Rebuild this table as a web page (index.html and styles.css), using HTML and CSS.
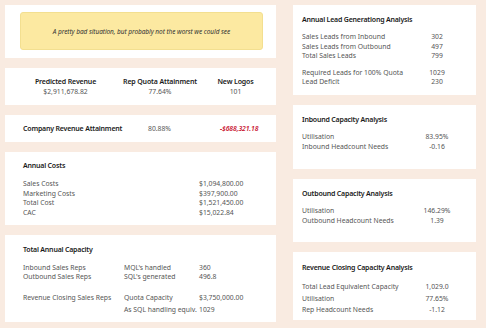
FILE: index.html
```html
<!DOCTYPE html>
<html>
<head>
    <title>Sales Capacity Overview</title>
    <link rel="stylesheet" href="styles.css">
</head>
<body>
    <div class="page">
        <div class="column">
            <div class="card card-note">
                <div class="note">A pretty bad situation, but probably not the worst we could see</div>
            </div>

            <div class="card card-kpis">
                <div class="kpi">
                    <div class="kpi-title">Predicted Revenue</div>
                    <div class="kpi-value">$2,911,678.82</div>
                </div>
                <div class="kpi">
                    <div class="kpi-title">Rep Quota Attainment</div>
                    <div class="kpi-value">77.64%</div>
                </div>
                <div class="kpi">
                    <div class="kpi-title">New Logos</div>
                    <div class="kpi-value">101</div>
                </div>
            </div>

            <div class="card card-attain">
                <div class="card-title">Company Revenue Attainment</div>
                <div class="muted">80.88%</div>
                <div class="negative">-$688,321.18</div>
            </div>

            <div class="card card-costs">
                <h3 class="card-title">Annual Costs</h3>
                <div class="cost-table">
                    <span>Sales Costs</span><span>$1,094,800.00</span>
                    <span>Marketing Costs</span><span>$397,900.00</span>
                    <span>Total Cost</span><span>$1,521,450.00</span>
                    <span>CAC</span><span>$15,022.84</span>
                </div>
            </div>

            <div class="card card-capacity">
                <h3 class="card-title">Total Annual Capacity</h3>
                <div class="cap-table">
                    <span>Inbound Sales Reps</span><span>MQL's handled</span><span>360</span>
                    <span>Outbound Sales Reps</span><span>SQL's generated</span><span>496.8</span>
                </div>
                <div class="cap-table cap-closing">
                    <span>Revenue Closing Sales Reps</span><span>Quota Capacity</span><span>$3,750,000.00</span>
                    <span></span><span>As SQL handling equiv.</span><span>1029</span>
                </div>
            </div>
        </div>

        <div class="column">
            <div class="card side side-leads">
                <h3 class="card-title">Annual Lead Generationg Analysis</h3>
                <div class="side-table">
                    <span>Sales Leads from Inbound</span><span>302</span>
                    <span>Sales Leads from Outbound</span><span>497</span>
                    <span>Total Sales Leads</span><span>799</span>
                </div>
                <div class="side-table spaced">
                    <span>Required Leads for 100% Quota</span><span>1029</span>
                    <span>Lead Deficit</span><span>230</span>
                </div>
            </div>

            <div class="card side side-inbound">
                <h3 class="card-title">Inbound Capacity Analysis</h3>
                <div class="side-table">
                    <span>Utilisation</span><span>83.95%</span>
                    <span>Inbound Headcount Needs</span><span>-0.16</span>
                </div>
            </div>

            <div class="card side side-outbound">
                <h3 class="card-title">Outbound Capacity Analysis</h3>
                <div class="side-table">
                    <span>Utilisation</span><span>146.29%</span>
                    <span>Outbound Headcount Needs</span><span>1.39</span>
                </div>
            </div>

            <div class="card side side-closing">
                <h3 class="card-title">Revenue Closing Capacity Analysis</h3>
                <div class="side-table tall">
                    <span>Total Lead Equivalent Capacity</span><span>1,029.0</span>
                    <span>Utilisation</span><span>77.65%</span>
                    <span>Rep Headcount Needs</span><span>-1.12</span>
                </div>
            </div>
        </div>
    </div>
</body>
</html>
```

FILE: styles.css
```css
body {
    margin: 0;
    font-family: "Noto Sans", Arial, sans-serif;
    font-size: 6.8px;
    background-color: #f9ebe1;
    color: #555555;
}
.page {
    display: grid;
    grid-template-columns: 271px 183px;
    column-gap: 17px;
    padding: 5px;
}
.column {
    display: flex;
    flex-direction: column;
    gap: 10px;
}
.card {
    background-color: #ffffff;
    box-sizing: border-box;
    padding: 0 18px;
}
.card-title {
    margin: 0;
    font-size: 7px;
    font-weight: 600;
    letter-spacing: -0.2px;
    color: #1a1a1a;
    line-height: 10px;
}
.muted {
    color: #555;
}

/* note */
.card-note {
    height: 53px;
    padding: 7px 13px 8px 15px;
}
.note {
    height: 100%;
    box-sizing: border-box;
    background-color: #fce9a1;
    border: 1px solid #f3df90;
    border-radius: 3px;
    display: flex;
    align-items: center;
    justify-content: center;
    font-style: italic;
    font-size: 6.5px;
    letter-spacing: -0.05px;
    color: #333;
}

/* kpis */
.card-kpis {
    height: 37px;
    display: grid;
    grid-template-columns: 85px 104px 47px;
    padding-top: 9px;
    text-align: center;
}
.kpi-title {
    font-size: 7px;
    font-weight: 600;
    letter-spacing: -0.15px;
    color: #1a1a1a;
    line-height: 10px;
}
.kpi-value {
    line-height: 9px;
}

/* attainment */
.card-attain {
    height: 27px;
    display: grid;
    grid-template-columns: 125px 72px auto;
    align-items: center;
}
.negative {
    color: #c8102e;
    font-style: italic;
    font-weight: 600;
    letter-spacing: -0.1px;
}

/* costs */
.card-costs {
    height: 73px;
    padding-top: 9px;
}
.cost-table {
    display: grid;
    grid-template-columns: 176px auto;
    line-height: 9.7px;
    margin-top: 8px;
}

/* capacity */
.card-capacity {
    height: 87px;
    padding-top: 10px;
}
.cap-table {
    display: grid;
    grid-template-columns: 101px 75px auto;
    line-height: 9px;
    margin-top: 8px;
    white-space: nowrap;
}
.cap-closing {
    margin-top: 12px;
    row-gap: 3px;
}

/* right side */
.side {
    padding: 10px 9px 0;
}
.side-leads { height: 90px; }
.side-inbound { height: 64px; }
.side-outbound { height: 63px; }
.side-closing { height: 68px; }
.side-closing .card-title {
    margin-top: 1px;
}
.side-table {
    display: grid;
    grid-template-columns: 110px 50px;
    line-height: 9.6px;
    margin-top: 7px;
}
.side-table span:nth-child(even) {
    text-align: center;
}
.side-table.spaced {
    margin-top: 7px;
}
.side-table.tall {
    line-height: 11.7px;
    margin-top: 8px;
}
```
